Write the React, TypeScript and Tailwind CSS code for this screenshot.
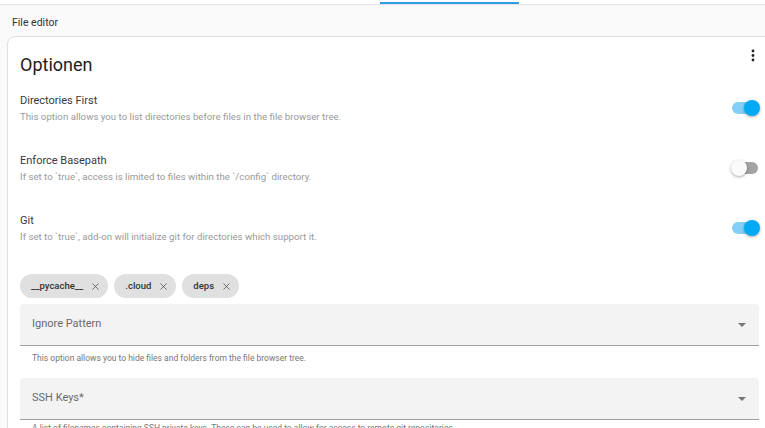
import React from 'react';
import { X } from 'lucide-react';

type Option = { title: string; description: string; on: boolean };

const options: Option[] = [
    { title: 'Directories First', description: 'This option allows you to list directories before files in the file browser tree.', on: true },
    { title: 'Enforce Basepath', description: 'If set to `true`, access is limited to files within the `/config` directory.', on: false },
    { title: 'Git', description: 'If set to `true`, add-on will initialize git for directories which support it.', on: true },
];

const Toggle: React.FC<{ on: boolean }> = ({ on }) => (
    <div className="relative w-[28px] h-[16px] flex items-center">
        <div className={on ? 'ml-[1px] w-[26px] h-[12px] rounded-full bg-[#82d0f7]' : 'ml-[1px] w-[26px] h-[12px] rounded-full bg-[#a3a3a3]'} />
        <div
            className={
                on
                    ? 'absolute right-[-1px] top-0 w-[16px] h-[16px] rounded-full bg-[#03a9f4] shadow-[0_1px_3px_rgba(0,0,0,0.35)]'
                    : 'absolute left-0 top-0 w-[16px] h-[16px] rounded-full bg-[#fafafa] shadow-[0_1px_3px_rgba(0,0,0,0.35)]'
            }
        />
    </div>
);

const SelectField: React.FC<{ label: string }> = ({ label }) => (
    <div className="h-[42px] bg-[#f3f3f3] rounded-t-[4px] border-b border-[#a0a0a0] flex items-center justify-between pl-[12px] pr-[13px]">
        <span className="text-[11px] text-[#6b6b6b]">{label}</span>
        <svg width="8" height="4" viewBox="0 0 8 4">
            <path d="M0 0 L8 0 L4 4 Z" fill="#757575" />
        </svg>
    </div>
);

export default function App() {
    return (
        <div className="w-[765px] h-[428px] overflow-hidden bg-[#fafafa] font-['Roboto',sans-serif]">
            {/* Tab strip */}
            <div className="relative h-[5px] bg-white border-b border-[#e2e2e2]">
                <div className="absolute left-[380px] bottom-0 w-[139px] h-[2px] bg-[#2f9de6]" />
            </div>

            {/* Section title */}
            <div className="h-[31px] px-[12px] pt-[10px] text-[10.5px] text-[#333]">File editor</div>

            {/* Card */}
            <div className="ml-[7px] w-[765px] h-[500px] bg-white border border-[#e0e0e0] rounded-tl-[8px] px-[12px]">
                <div className="flex justify-between items-start h-[41px]">
                    <h1 className="pt-[14px] text-[18px] leading-[28px] text-[#212121]">Optionen</h1>
                    <svg width="6" height="13" viewBox="0 0 6 13" className="mt-[12px] mr-[3px]">
                        <circle cx="3" cy="2" r="1.4" fill="#222" />
                        <circle cx="3" cy="6.5" r="1.4" fill="#222" />
                        <circle cx="3" cy="11" r="1.4" fill="#222" />
                    </svg>
                </div>

                {options.map((o) => (
                    <div key={o.title} className="h-[60px] flex items-center justify-between">
                        <div>
                            <div className="text-[11px] leading-[17px] text-[#3a3a3a]">{o.title}</div>
                            <div className="text-[9.7px] leading-[16px] text-[#9a9a9a]">{o.description}</div>
                        </div>
                        <Toggle on={o.on} />
                    </div>
                ))}

                {/* Chips */}
                <div className="mt-[16px] flex gap-[6px] h-[24px]">
                    {['__pycache__', '.cloud', 'deps'].map((c) => (
                        <div key={c} className="h-[24px] rounded-full bg-[#e0e0e0] flex items-center pl-[11px] pr-[7px] gap-[7px]">
                            <span className="text-[9.5px] font-medium text-[#333]">{c}</span>
                            <X size={11} strokeWidth={1.6} color="#444" />
                        </div>
                    ))}
                </div>

                <div className="mt-[6px]">
                    <SelectField label="Ignore Pattern" />
                    <div className="h-[32px] pl-[12px] pt-[6px] text-[8.5px] text-[#777]">
                        This option allows you to hide files and folders from the file browser tree.
                    </div>
                    <SelectField label="SSH Keys*" />
                    <div className="h-[32px] pl-[12px] pt-[2px] text-[8.5px] text-[#777]">
                        A list of filenames containing SSH private keys. These can be used to allow for access to remote git repositories.
                    </div>
                </div>
            </div>
        </div>
    );
}
